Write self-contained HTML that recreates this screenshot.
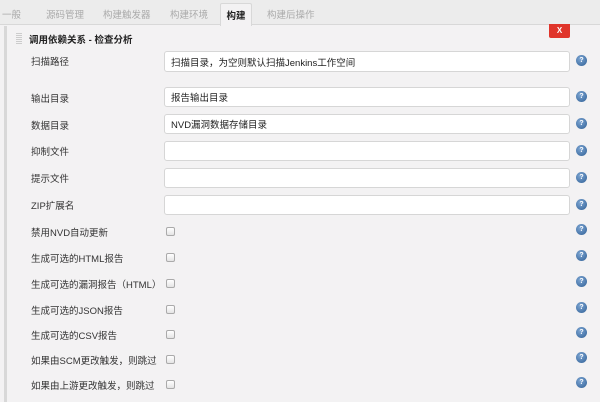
<!DOCTYPE html>
<html><head><meta charset="utf-8"><style>
*{margin:0;padding:0;box-sizing:border-box}
body{width:600px;height:402px;overflow:hidden;background:#f3f2f3;font-family:"Liberation Sans","Noto Sans CJK SC",sans-serif;font-size:9.5px;color:#333;position:relative}
.tabs{position:absolute;left:0;top:0;width:600px;height:25px;background:#ececec;border-bottom:1px solid #d8d8d8}
.tab{position:absolute;top:7px;color:#aaa;font-size:9.5px}
.act{position:absolute;left:220px;top:3px;width:32px;height:23px;background:#f3f2f3;border:1px solid #d8d8d8;border-bottom:none;font-weight:bold;color:#222;text-align:center;padding-top:4px;border-radius:2px 2px 0 0}
.lbar{position:absolute;left:4px;top:26px;width:3px;height:376px;background:#d8d8d8}
.grip{position:absolute;left:16px;top:33px;width:6px;height:12px;background:repeating-linear-gradient(#ccc 0 1px,transparent 1px 2px)}
.hd{position:absolute;left:29px;top:32px;font-weight:bold;font-size:9.5px;color:#222}
.x{position:absolute;left:549px;top:24px;width:21px;height:14px;background:#e0352b;color:#fff;font-weight:bold;font-size:8px;text-align:center;line-height:14px;border-radius:0 0 2px 2px}
.l{position:absolute;left:31px;font-size:9.5px;color:#333}
.in{position:absolute;left:164px;width:406px;height:20px;background:#fff;border:1px solid #d6d6d6;border-radius:3px;padding-left:6px;display:flex;align-items:center;color:#222}
.cb{position:absolute;left:166px;width:9px;height:9px;border:1px solid #aaa;border-radius:2px;background:linear-gradient(#fff,#e4e4e4)}
.h{position:absolute;left:576px;width:11px;height:11px;border-radius:50%;background:radial-gradient(circle at 40% 35%,#7da6d3,#2f5f95);color:#fff;font-size:7px;font-weight:bold;text-align:center;line-height:11px}
</style></head><body>
<div class="tabs">
<span class="tab" style="left:2px">一般</span>
<span class="tab" style="left:46px">源码管理</span>
<span class="tab" style="left:103px">构建触发器</span>
<span class="tab" style="left:170px">构建环境</span>
<span class="tab" style="left:267px">构建后操作</span>
</div>
<div class="act">构建</div>
<div class="lbar"></div>
<div class="grip"></div>
<div class="hd">调用依赖关系 - 检查分析</div>
<div class="x">X</div>

<div class="l" style="top:54px">扫描路径</div>
<div class="in" style="top:51px;height:21px">扫描目录，为空则默认扫描Jenkins工作空间</div>
<div class="h" style="top:55px">?</div>

<div class="l" style="top:91px">输出目录</div>
<div class="in" style="top:87px">报告输出目录</div>
<div class="h" style="top:91px">?</div>

<div class="l" style="top:118px">数据目录</div>
<div class="in" style="top:114px">NVD漏洞数据存储目录</div>
<div class="h" style="top:118px">?</div>

<div class="l" style="top:144px">抑制文件</div>
<div class="in" style="top:141px"></div>
<div class="h" style="top:145px">?</div>

<div class="l" style="top:171px">提示文件</div>
<div class="in" style="top:168px"></div>
<div class="h" style="top:172px">?</div>

<div class="l" style="top:198px">ZIP扩展名</div>
<div class="in" style="top:195px"></div>
<div class="h" style="top:199px">?</div>

<div class="l" style="top:225px">禁用NVD自动更新</div><div class="cb" style="top:227px"></div><div class="h" style="top:224px">?</div>
<div class="l" style="top:251px">生成可选的HTML报告</div><div class="cb" style="top:253px"></div><div class="h" style="top:250px">?</div>
<div class="l" style="top:277px">生成可选的漏洞报告（HTML）</div><div class="cb" style="top:279px"></div><div class="h" style="top:276px">?</div>
<div class="l" style="top:303px">生成可选的JSON报告</div><div class="cb" style="top:305px"></div><div class="h" style="top:302px">?</div>
<div class="l" style="top:328px">生成可选的CSV报告</div><div class="cb" style="top:330px"></div><div class="h" style="top:327px">?</div>
<div class="l" style="top:353px">如果由SCM更改触发，则跳过</div><div class="cb" style="top:355px"></div><div class="h" style="top:352px">?</div>
<div class="l" style="top:378px">如果由上游更改触发，则跳过</div><div class="cb" style="top:380px"></div><div class="h" style="top:377px">?</div>
</body></html>
